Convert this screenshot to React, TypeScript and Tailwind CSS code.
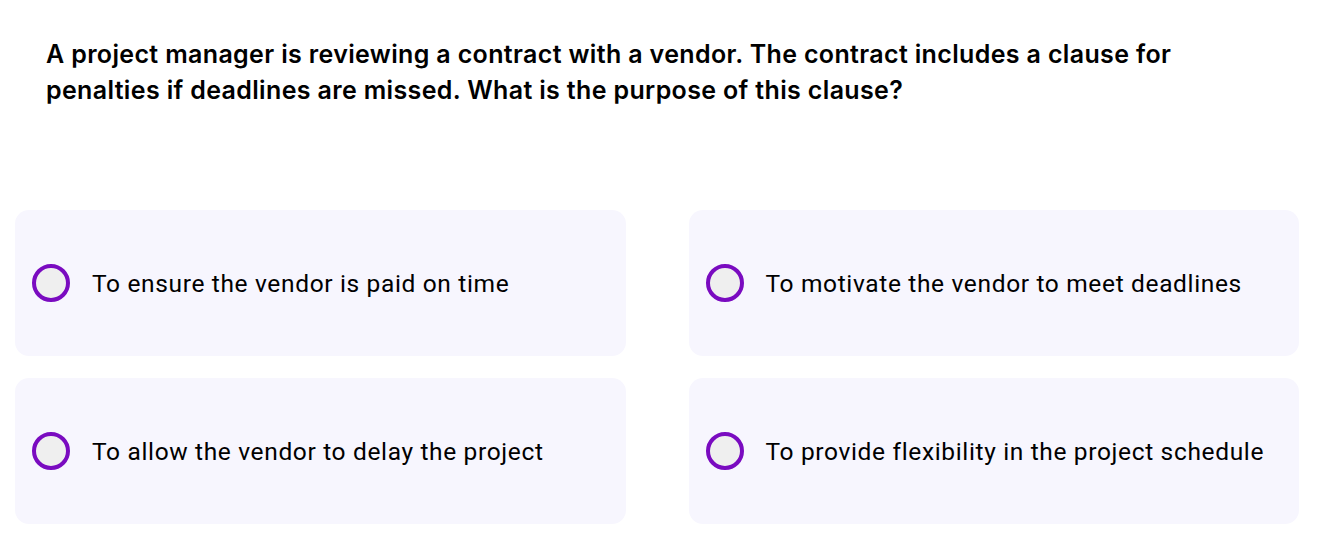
const options = [
  'To ensure the vendor is paid on time',
  'To motivate the vendor to meet deadlines',
  'To allow the vendor to delay the project',
  'To provide flexibility in the project schedule',
];

const Option = ({ label }: { label: string }) => {
  return (
    <label className="flex h-[146px] cursor-pointer items-center gap-[22px] rounded-[14px] bg-[#f7f6fe] px-[17px]">
      <span className="box-border h-[38px] w-[38px] shrink-0 rounded-full border-[4px] border-[#7a0bc0] bg-[#efefef]" />
      <span className="pt-[2px] text-[24.5px] leading-[30px] tracking-[0.65px] text-black [font-family:Roboto,sans-serif]">{label}</span>
    </label>
  );
};

const App = () => {
  return (
    <div className="min-h-[537px] w-full bg-white px-[15px] pt-[36px]">
      <h2 className="w-[1220px] px-[31px] text-[25px] font-semibold leading-[36px] tracking-[0.35px] text-black [font-family:Inter,sans-serif]">
        A project manager is reviewing a contract with a vendor. The contract includes a clause for penalties if deadlines are missed. What is the purpose of this clause?
      </h2>
      <div className="mt-[102px] grid w-[1284px] grid-cols-2 gap-x-[63px] gap-y-[22px]">
        {options.map((o) => (
          <Option key={o} label={o} />
        ))}
      </div>
    </div>
  );
};

export default App;
